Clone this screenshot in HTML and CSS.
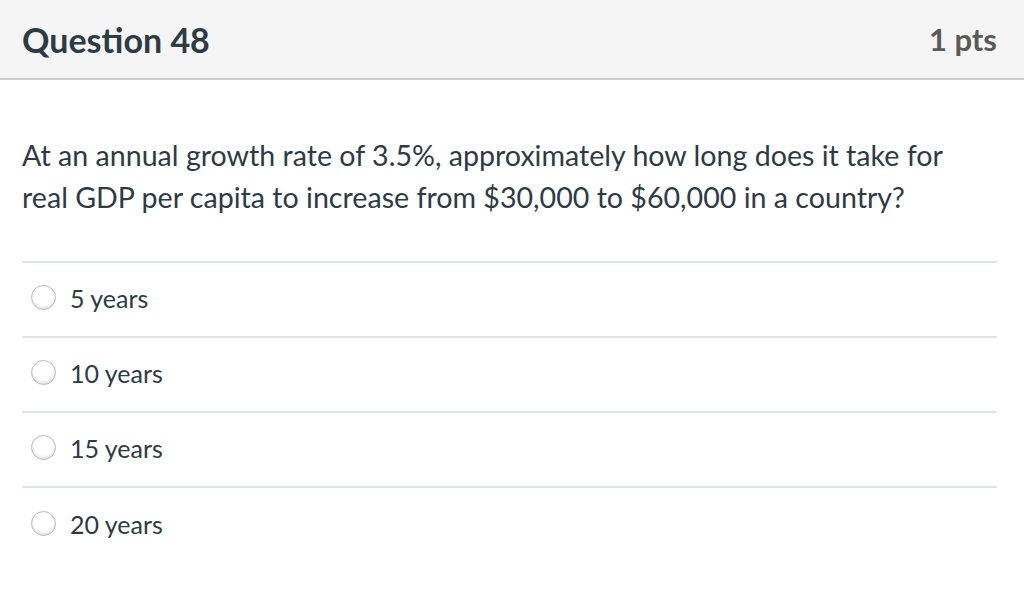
FILE: index.html
```html
<!DOCTYPE html>
<html>
<head>
<meta charset="utf-8">
<link rel="stylesheet" href="styles.css">
</head>
<body>
<div class="quiz">
  <div class="header">
    <h2 class="title">Question 48</h2>
    <div class="pts">1 pts</div>
  </div>
  <div class="body">
    <p class="text">At an annual growth rate of 3.5%, approximately how long does it take for real GDP per capita to increase from $30,000 to $60,000 in a country?</p>
    <div class="answers">
      <div class="answer"><span class="radio"></span><span class="label">5 years</span></div>
      <div class="answer"><span class="radio"></span><span class="label">10 years</span></div>
      <div class="answer"><span class="radio"></span><span class="label">15 years</span></div>
      <div class="answer"><span class="radio"></span><span class="label">20 years</span></div>
    </div>
  </div>
</div>
</body>
</html>
```
FILE: styles.css
```css
html, body {
  margin: 0;
  padding: 0;
  background: #fff;
}
body {
  font-family: Lato, "Open Sans", sans-serif;
  color: #2d3b45;
}
.header {
  display: flex;
  align-items: center;
  justify-content: space-between;
  height: 78px;
  padding: 0 27px 0 22px;
  background: #f5f5f5;
  border-bottom: 2px solid #c7cdd1;
}
.title {
  margin: 0;
  font-size: 34px;
  font-weight: 700;
  color: #2d3b45;
}
.pts {
  font-size: 31px;
  font-weight: 700;
  color: #5a5a5a;
}
.body {
  padding: 54px 27px 0 22px;
}
.text {
  margin: 0 0 43px;
  padding-right: 40px;
  font-size: 28.6px;
  line-height: 42px;
}
.answers {
  border-top: 2px solid #e0e3e5;
}
.answer {
  box-sizing: border-box;
  display: flex;
  align-items: center;
  height: 75px;
  padding-bottom: 5px;
  border-bottom: 2px solid #e0e3e5;
}
.answer:last-child {
  border-bottom: none;
}
.radio {
  box-sizing: border-box;
  width: 25px;
  height: 25px;
  margin: 0 14px 0 9px;
  border-radius: 50%;
  border: 1px solid #b8b8b8;
  background: #fff;
  box-shadow: inset 0 -2px 3px rgba(0,0,0,0.12);
}
.label {
  font-size: 25px;
  margin-top: 2px;
}
```
